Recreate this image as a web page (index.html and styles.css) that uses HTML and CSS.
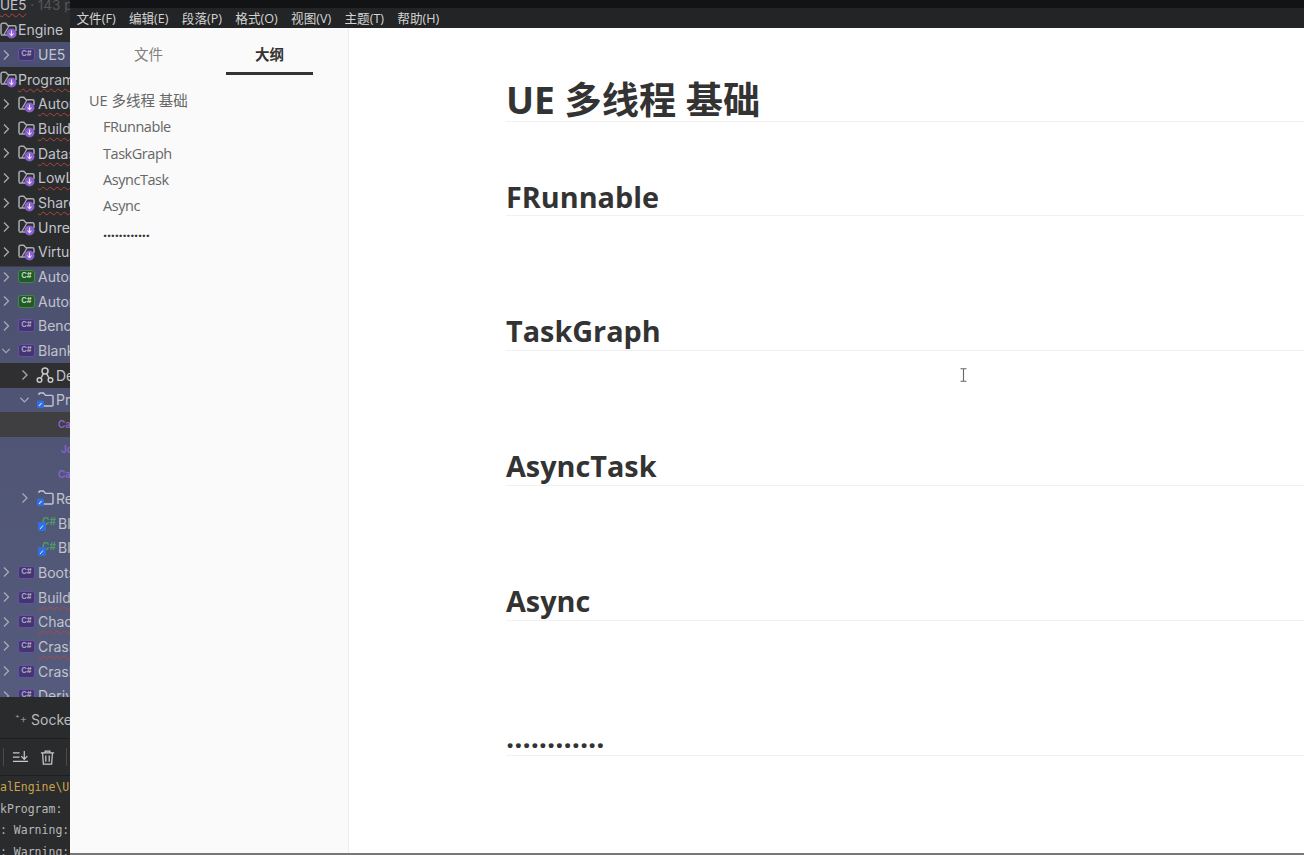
FILE: index.html
```html
<!DOCTYPE html>
<html lang="zh-CN">
<head>
<meta charset="utf-8">
<title>UE 多线程 基础</title>
<link rel="stylesheet" href="styles.css">
</head>
<body>
<svg class="defs" width="0" height="0" aria-hidden="true">
  <symbol id="chev-r" viewBox="0 0 10 12"><path d="M3 1.500 7.500 6 3 10.500" fill="none" stroke="currentColor" stroke-width="1.300"/></symbol>
  <symbol id="chev-d" viewBox="0 0 12 10"><path d="M1.500 2.500 6 7l4.500-4.500" fill="none" stroke="currentColor" stroke-width="1.300"/></symbol>
  <symbol id="folder" viewBox="0 0 18 18"><path d="M1 13.500V4C1 3 1.700 2.300 2.600 2.300h3.200l2.200 2.400h6.400c.9 0 1.600.7 1.600 1.500V10" fill="none" stroke="#a9abb2" stroke-width="1.500"/><path d="M1 14h6M4 13.500 9 5" stroke="#a9abb2" stroke-width="1.300"/><circle cx="11.500" cy="12.500" r="5" fill="#8a5fd0"/><path d="M11.500 9.500v5M9.500 12.500l2 2.200 2-2.200" fill="none" stroke="#e8e0f8" stroke-width="1.100"/></symbol>
  <symbol id="pfolder" viewBox="0 0 18 18"><path d="M3 4V3c0-.6.500-1 1-1h3.500l2 2.400H16c.6 0 1 .4 1 1V14c0 .6-.4 1-1 1H7" fill="none" stroke="#c4c6d0" stroke-width="1.400"/><rect x="1" y="9.500" width="7" height="7.500" rx="1" fill="#2f6fe0"/><path d="M3 15l2.500-3" stroke="#dfe9ff" stroke-width="1.100"/></symbol>
  <symbol id="graph" viewBox="0 0 18 18"><circle cx="9" cy="5" r="3" fill="none" stroke="#c8c8c8" stroke-width="1.500"/><circle cx="3.500" cy="14" r="2.300" fill="none" stroke="#c8c8c8" stroke-width="1.500"/><circle cx="14.500" cy="14" r="2.300" fill="none" stroke="#c8c8c8" stroke-width="1.500"/><path d="M7.500 7.500 5 12M10.500 7.500 13 12" stroke="#c8c8c8" stroke-width="1.500"/></symbol>
  <symbol id="pin" viewBox="0 0 8 9"><rect width="8" height="9" rx="1" fill="#2f6fe0"/><path d="M2 7l3-3.500" stroke="#dfe9ff"/></symbol>
</svg>

<div class="screen">
  <aside class="ide">
    <div class="tree">
      <div class="row top"><span class="lbl wavy">UE5</span><span class="dim"> · 143 p</span></div>
      <div class="row l0"><svg class="ic"><use href="#folder"/></svg><span class="lbl">Engine</span></div>
      <div class="row l1 sel"><svg class="ch"><use href="#chev-r"/></svg><span class="box p">C#</span><span class="lbl">UE5</span></div>
      <div class="row l0"><svg class="ic"><use href="#folder"/></svg><span class="lbl wavy">Program</span></div>
      <div class="row l1"><svg class="ch"><use href="#chev-r"/></svg><svg class="ic"><use href="#folder"/></svg><span class="lbl wavy">Automa</span></div>
      <div class="row l1"><svg class="ch"><use href="#chev-r"/></svg><svg class="ic"><use href="#folder"/></svg><span class="lbl wavy">Build</span></div>
      <div class="row l1"><svg class="ch"><use href="#chev-r"/></svg><svg class="ic"><use href="#folder"/></svg><span class="lbl wavy">Datas</span></div>
      <div class="row l1"><svg class="ch"><use href="#chev-r"/></svg><svg class="ic"><use href="#folder"/></svg><span class="lbl wavy">LowLe</span></div>
      <div class="row l1"><svg class="ch"><use href="#chev-r"/></svg><svg class="ic"><use href="#folder"/></svg><span class="lbl wavy">Share</span></div>
      <div class="row l1"><svg class="ch"><use href="#chev-r"/></svg><svg class="ic"><use href="#folder"/></svg><span class="lbl">Unrea</span></div>
      <div class="row l1"><svg class="ch"><use href="#chev-r"/></svg><svg class="ic"><use href="#folder"/></svg><span class="lbl">Virtua</span></div>
      <div class="row l1 blue"><svg class="ch"><use href="#chev-r"/></svg><span class="box g">C#</span><span class="lbl">Autom</span></div>
      <div class="row l1 blue"><svg class="ch"><use href="#chev-r"/></svg><span class="box g">C#</span><span class="lbl">Autom</span></div>
      <div class="row l1 blue"><svg class="ch"><use href="#chev-r"/></svg><span class="box p">C#</span><span class="lbl">Bench</span></div>
      <div class="row l1 blue"><svg class="ch"><use href="#chev-d"/></svg><span class="box p">C#</span><span class="lbl">Blank</span></div>
      <div class="row l2 dark"><svg class="ch"><use href="#chev-r"/></svg><svg class="ic"><use href="#graph"/></svg><span class="lbl">De</span></div>
      <div class="row l2 blue"><svg class="ch"><use href="#chev-d"/></svg><svg class="ic"><use href="#pfolder"/></svg><span class="lbl">Pr</span></div>
      <div class="row l3 hl"><span class="file">Ca</span></div>
      <div class="row l3 blue"><span class="file wide">Jo</span></div>
      <div class="row l3 blue"><span class="file">Ca</span></div>
      <div class="row l2 blue"><svg class="ch"><use href="#chev-r"/></svg><svg class="ic"><use href="#pfolder"/></svg><span class="lbl">Re</span></div>
      <div class="row l4 blue"><span class="cs"><i>C#</i><svg class="pin"><use href="#pin"/></svg></span><span class="lbl">Bl</span></div>
      <div class="row l4 blue"><span class="cs"><i>C#</i><svg class="pin"><use href="#pin"/></svg></span><span class="lbl">Bl</span></div>
      <div class="row l1 blue"><svg class="ch"><use href="#chev-r"/></svg><span class="box p">C#</span><span class="lbl">Boots</span></div>
      <div class="row l1 blue"><svg class="ch"><use href="#chev-r"/></svg><span class="box p">C#</span><span class="lbl wavy">Build</span></div>
      <div class="row l1 blue"><svg class="ch"><use href="#chev-r"/></svg><span class="box p">C#</span><span class="lbl wavy">Chaos</span></div>
      <div class="row l1 blue"><svg class="ch"><use href="#chev-r"/></svg><span class="box p">C#</span><span class="lbl wavy">Crash</span></div>
      <div class="row l1 blue"><svg class="ch"><use href="#chev-r"/></svg><span class="box p">C#</span><span class="lbl">Crash</span></div>
      <div class="row l1 blue"><svg class="ch"><use href="#chev-r"/></svg><span class="box p">C#</span><span class="lbl">Deriv</span></div>
    </div>
    <div class="tool">
      <div class="tool-tab"><span class="plus">⁺+</span><span class="lbl">Socket</span></div>
      <div class="tool-bar">
        <span class="sep"></span>
        <svg class="tb" viewBox="0 0 18 18"><path d="M1 4h7M1 8.500h7M1 13h16M13 2v8.500M9.800 7.500 13 11l3.200-3.500" fill="none" stroke="#c9c9c9" stroke-width="1.300"/></svg>
        <svg class="tb" viewBox="0 0 18 18"><path d="M2 4h14M6.500 4V2.200h5V4M3.800 4l.8 12h8.800l.8-12M7.200 7v6.500M10.800 7v6.500" fill="none" stroke="#c9c9c9" stroke-width="1.300"/></svg>
        <span class="sep"></span>
      </div>
      <div class="console">
        <div class="amber">alEngine\U</div>
        <div>kProgram:</div>
        <div>: Warning:</div>
        <div>: Warning:</div>
      </div>
    </div>
  </aside>

  <div class="app">
    <nav class="menubar">
      <span>文件(F)</span><span>编辑(E)</span><span>段落(P)</span><span>格式(O)</span><span>视图(V)</span><span>主题(T)</span><span>帮助(H)</span>
    </nav>
    <div class="body">
      <aside class="side">
        <div class="tabs">
          <div class="tab">文件</div>
          <div class="tab on">大纲</div>
        </div>
        <ul class="outline">
          <li class="o1">UE 多线程 基础</li>
          <li>FRunnable</li>
          <li>TaskGraph</li>
          <li>AsyncTask</li>
          <li>Async</li>
          <li class="odots">............</li>
        </ul>
      </aside>
      <main class="doc">
        <h1>UE 多线程 基础</h1>
        <h2>FRunnable</h2>
        <h2>TaskGraph</h2>
        <h2>AsyncTask</h2>
        <h2>Async</h2>
        <h2>............</h2>
        <svg class="caret" viewBox="0 0 7 14" aria-hidden="true"><path d="M.5.7h6M.5 13.300h6M3.500.7v12.600" fill="none" stroke="#666" stroke-width="1.100"/></svg>
      </main>
    </div>
  </div>
</div>
</body>
</html>
```
FILE: styles.css
```css
* { box-sizing: border-box; }
html, body { margin: 0; height: 100%; overflow: hidden; }
.defs { position: absolute; }
.screen { display: flex; width: 1304px; height: 855px; background: #fff; }

/* IDE behind the editor */
.ide { width: 70px; flex: none; display: flex; flex-direction: column; overflow: hidden; background: #2a2b2c; font-family: Inter, "Liberation Sans", sans-serif; color: #c2c4cb; }
.tree { height: 697px; flex: none; overflow: hidden; background: linear-gradient(#2b2c2e 0, #2b2c2e 266px, #4c5170 267px, #555b7c 697px); }
.row { height: 24.67px; display: flex; align-items: center; white-space: nowrap; font-size: 14px; }
.row.top { margin-top: -7px; font-size: 13.500px; }
.dim { color: #55575c; white-space: pre; }
.l1 { padding-left: 1px; }
.l2 { padding-left: 19px; }
.l3 { padding-left: 58px; }
.l4 { padding-left: 38px; }
.sel { background: #4b5072; }
.dark { background: #2f2f31; }
.hl { background: #3f3e41; }
.ch { width: 10px; height: 12px; flex: none; color: #a9abb3; margin-right: 7px; }
.l2 .ch { margin-right: 6px; width: 11px; }
.ic { width: 18px; height: 18px; flex: none; margin-right: 2px; }
.l0 .ic { margin-right: 0; }
.box { width: 17px; height: 13px; flex: none; margin-right: 3px; border-radius: 3px; border: 1.500px solid; font-size: 7.500px; font-weight: 700; line-height: 10px; text-align: center; }
.box.p { background: #43356f; border-color: #6a4da6; color: #a9a3c6; }
.box.g { background: #24572a; border-color: #3d8f3f; color: #b9dcb6; }
.lbl { flex: none; }
.wavy { text-decoration: underline wavy #b3453e 1px; text-underline-offset: 3px; }
.file { font-size: 10px; color: #8a63c9; font-weight: 600; }
.file.wide { margin-left: 3px; }
.cs { position: relative; width: 18px; height: 16px; flex: none; margin-right: 2px; }
.cs i { position: absolute; right: 0; top: 0; font-size: 10px; font-style: normal; color: #4f9a63; font-weight: 700; }
.pin { position: absolute; left: 0; bottom: 0; width: 8px; height: 9px; }

.tool { flex: 1; min-height: 0; display: flex; flex-direction: column; overflow: hidden; }
.tool-tab { height: 41px; flex: none; padding: 3px 0 0 15px; display: flex; align-items: center; gap: 4px; font-size: 14px; white-space: nowrap; color: #b9bbbf; }
.plus { font-size: 11px; color: #8c8e92; }
.tool-bar { height: 38px; flex: none; display: flex; align-items: center; gap: 8px; padding-left: 3px; border-top: 1px solid #1f1f20; border-bottom: 1px solid #1f1f20; }
.sep { width: 1px; height: 18px; background: #4a4b4d; flex: none; }
.tb { width: 17px; height: 17px; flex: none; }
.tb + .tb { margin-left: 2px; }
.tb + .sep { margin-left: 2px; }
.console { font-family: "DejaVu Sans Mono", "Liberation Mono", monospace; font-size: 11.500px; line-height: 21.500px; color: #b8b8b8; white-space: nowrap; padding-top: 1px; }
.amber { color: #c9a24d; }

/* Typora */
.app { flex: 1; min-width: 0; display: flex; flex-direction: column; border-top: 8px solid #121314; border-bottom: 2px solid #777; }
.menubar { height: 20px; flex: none; background: #232425; color: #d4d4d4; display: flex; align-items: center; gap: 13.300px; padding: 0 0 1px 6.500px; font-family: "Open Sans", "Noto Sans CJK SC", sans-serif; font-size: 12.600px; white-space: nowrap; }
.body { flex: 1; min-height: 0; display: flex; }
.side { width: 279px; flex: none; background: #fafafa; border-right: 1px solid #eeeeee; font-family: "Open Sans", "Noto Sans CJK SC", sans-serif; color: #666; }
.tabs { display: flex; height: 47px; padding-left: 35px; }
.tab { width: 87px; margin-right: 34px; height: 47px; text-align: center; font-size: 14.500px; line-height: 54px; color: #808080; }
.tab.on { color: #333; font-weight: 700; border-bottom: 3px solid #333; }
.outline { list-style: none; margin: 0; padding: 13px 0 0 33px; font-size: 14.500px; line-height: 26.300px; letter-spacing: -.45px; }
.outline .o1 { margin-left: -14px; letter-spacing: 0; }
.outline .odots { color: #333; font-weight: 700; letter-spacing: -.25px; }
.doc { position: relative; flex: 1; min-width: 0; padding: 43px 0 0 157px; font-family: "Open Sans", "Noto Sans CJK SC", sans-serif; color: #333; overflow: hidden; }
.doc h1 { margin: 0; height: 50.500px; font-size: 37.200px; font-weight: 700; line-height: 58px; border-bottom: 1px solid #f0f0f0; }
.doc h2 { margin: 0; height: 135.200px; font-size: 28.800px; font-weight: 700; line-height: 1; border-bottom: 1px solid #f0f0f0; display: flex; align-items: flex-end; padding-bottom: 4px; }
.doc h1 + h2 { height: 94px; padding-bottom: 3px; }
.doc h2:last-of-type { padding-bottom: 3px; }
.caret { position: absolute; left: 611px; top: 340px; width: 7px; height: 14px; }
```
